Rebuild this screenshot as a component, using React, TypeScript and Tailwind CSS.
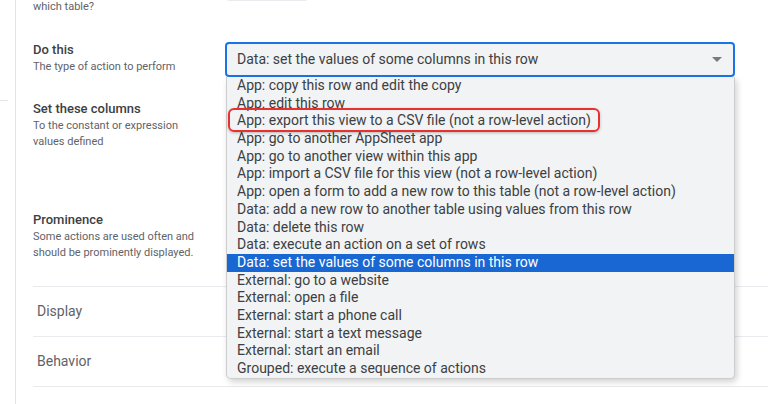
const options = [
  'App: copy this row and edit the copy',
  'App: edit this row',
  'App: export this view to a CSV file (not a row-level action)',
  'App: go to another AppSheet app',
  'App: go to another view within this app',
  'App: import a CSV file for this view (not a row-level action)',
  'App: open a form to add a new row to this table (not a row-level action)',
  'Data: add a new row to another table using values from this row',
  'Data: delete this row',
  'Data: execute an action on a set of rows',
  'Data: set the values of some columns in this row',
  'External: go to a website',
  'External: open a file',
  'External: start a phone call',
  'External: start a text message',
  'External: start an email',
  'Grouped: execute a sequence of actions',
]

const selected = 'Data: set the values of some columns in this row'

function Label({ title, desc }: { title: string; desc: string[] }) {
  return (
    <div className="w-[192px] shrink-0">
      <div className="text-[13px] leading-[18px] font-medium text-[#3c4043]">{title}</div>
      {desc.map((d) => (
        <div key={d} className="text-[11px] leading-[16px] text-[#5f6368]">
          {d}
        </div>
      ))}
    </div>
  )
}

export default function App() {
  return (
    <div
      className="w-[768px] h-[404px] overflow-hidden bg-white flex"
      style={{ fontFamily: 'Roboto, "Liberation Sans", sans-serif' }}
    >
      {/* Left rail */}
      <div className="w-[16px] shrink-0 border-r border-[#e3e3e3]">
        <div className="mt-[100px] w-[8px] border-t border-[#e6e6e6]" />
      </div>

      {/* Form */}
      <div className="flex-1 pl-[17px] flex flex-col">
        {/* Previous row tail */}
        <div className="flex h-[15px]">
          <div className="w-[192px] mt-[-1px] text-[11px] leading-[16px] text-[#5f6368]">which table?</div>
          <div className="mt-[-10px] h-[11px] w-[82px] ml-[1px] rounded-[3px] border border-[#e8eaed] bg-[#f8f9fa]" />
        </div>

        {/* Do this */}
        <div className="flex mt-[26px]">
          <Label title="Do this" desc={['The type of action to perform']} />
          <div className="relative w-[510px]">
            <div className="h-[35px] mt-[1px] rounded-[4px] border-2 border-[#1a73e8] bg-[#f1f3f4] flex items-center pl-[10px] pr-[10px]">
              <span className="flex-1 text-[14px] text-[#3c4043]">{selected}</span>
              <svg width="10" height="5" viewBox="0 0 10 5" className="mr-[1px]">
                <path d="M0 0 L10 0 L5 5 Z" fill="#7a7a7a" />
              </svg>
            </div>

            {/* Open dropdown */}
            <div className="absolute left-[1px] top-[36px] w-[509px] z-10 bg-[#f1f3f4] border border-[#cdcdcd] border-t-0 rounded-b-[5px] shadow-[2px_3px_6px_rgba(0,0,0,0.18)]">
              {options.map((o) => (
                <div
                  key={o}
                  className={`h-[17.7px] pl-[10px] text-[14px] leading-[17.7px] whitespace-nowrap ${
                    o === selected ? 'bg-[#1967d2] text-white' : 'text-[#3c4043]'
                  }`}
                >
                  {o}
                </div>
              ))}
              <div className="absolute left-[1px] top-[31px] w-[372px] h-[24px] rounded-[6px] border-2 border-[#e8302f] shadow-[0_1px_3px_rgba(0,0,0,0.25)]" />
            </div>
          </div>
        </div>

        {/* Set these columns */}
        <div className="flex mt-[23px]">
          <Label title="Set these columns" desc={['To the constant or expression', 'values defined']} />
        </div>

        {/* Prominence */}
        <div className="flex mt-[61px]">
          <Label title="Prominence" desc={['Some actions are used often and', 'should be prominently displayed.']} />
        </div>

        {/* Collapsible sections */}
        <div className="mt-[25px] border-t border-[#e8eaed] h-[50px] flex items-center pl-[4px] text-[14px] text-[#5f6368]">
          Display
        </div>
        <div className="border-t border-[#e8eaed] h-[50px] flex items-center pl-[4px] text-[14px] text-[#5f6368]">
          Behavior
        </div>
        <div className="border-t border-[#e8eaed] flex-1" />
      </div>
    </div>
  )
}
